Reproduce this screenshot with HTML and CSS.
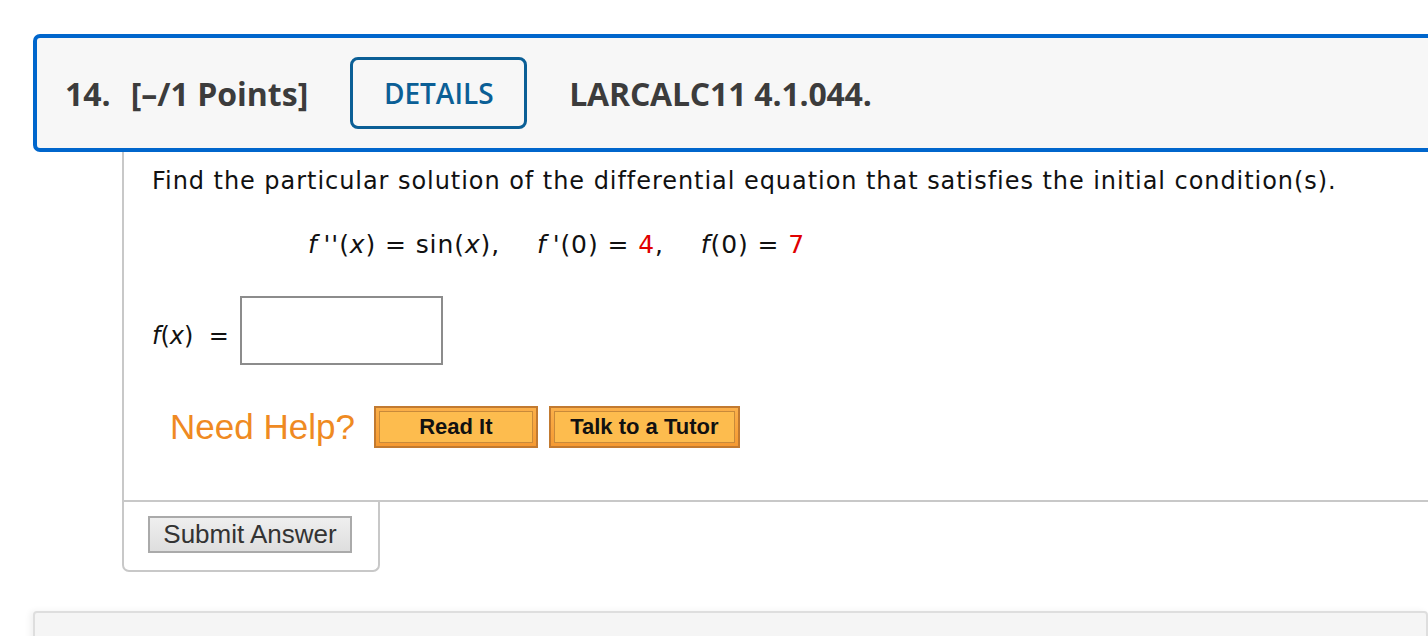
FILE: index.html
```html
<!DOCTYPE html>
<html>
<head>
<meta charset="utf-8">
<link rel="stylesheet" href="styles.css">
</head>
<body>
<div class="page">
  <div class="question">
    <div class="q-header">
      <span class="q-num">14.</span>
      <span class="q-points">[–/1 Points]</span>
      <span class="details-btn">DETAILS</span>
      <span class="q-code">LARCALC11 4.1.044.</span>
    </div>
    <div class="q-body">
      <p class="prompt">Find the particular solution of the differential equation that satisfies the initial condition(s).</p>
      <p class="equation"><i>f</i>&#8239;''(<i>x</i>) = sin(<i>x</i>),<span class="sp"></span><i>f</i>&#8239;'(0) = <span class="red">4</span>,<span class="sp"></span><i>f</i>(0) = <span class="red">7</span></p>
      <div class="answer-row">
        <span class="answer-label"><i>f</i>(<i>x</i>)&nbsp; =</span>
        <span class="answer-box"></span>
      </div>
      <div class="help-row">
        <span class="need-help">Need Help?</span>
        <span class="help-btn read"><span class="help-inner">Read It</span></span>
        <span class="help-btn tutor"><span class="help-inner">Talk to a Tutor</span></span>
      </div>
    </div>
    <div class="submit-tab">
      <span class="submit-btn">Submit Answer</span>
    </div>
  </div>
  <div class="next-card"></div>
</div>
</body>
</html>
```
FILE: styles.css
```css
html, body {
  margin: 0;
  padding: 0;
  background: #ffffff;
}
.page {
  width: 1428px;
  height: 636px;
  overflow: hidden;
  padding-top: 34px;
  box-sizing: border-box;
}
.question {
  margin-left: 33px;
}
.q-header {
  display: flex;
  align-items: center;
  height: 110px;
  margin-right: -40px;
  border: 4px solid #0066cc;
  border-radius: 7px;
  background: #f7f7f7;
  font-family: "Open Sans", sans-serif;
  font-weight: 700;
  color: #3c3c3c;
  font-size: 32px;
  padding-left: 28px;
}
.q-num {
  margin-right: 20px;
}
.q-points {
  margin-right: 42px;
}
.details-btn {
  display: flex;
  align-items: center;
  justify-content: center;
  width: 171px;
  height: 66px;
  border: 3px solid #0b5f96;
  border-radius: 8px;
  color: #0b5f96;
  font-weight: 600;
  font-size: 28px;
  background: #f7f7f7;
  margin-right: 42px;
}
.q-code {
  display: inline-block;
  letter-spacing: -0.2px;
}
.q-body {
  margin-left: 89px;
  border-left: 2px solid #c8c8c8;
  border-bottom: 2px solid #c8c8c8;
  padding: 12px 0 52px 28px;
  font-family: "DejaVu Sans", Verdana, sans-serif;
  color: #111;
  font-size: 24px;
  letter-spacing: 0.95px;
}
.prompt {
  margin: 0;
  line-height: 34px;
}
.equation {
  margin: 30px 0 0 156px;
  line-height: 34px;
  font-size: 25px;
  letter-spacing: 0.9px;
}
.sp {
  display: inline-block;
  width: 37px;
}
.red {
  color: #e00000;
}
.answer-row {
  display: flex;
  align-items: center;
  margin-top: 34px;
  letter-spacing: 0;
}
.answer-label {
  width: 88px;
  padding-top: 10px;
}
.answer-box {
  width: 199px;
  height: 65px;
  border: 2px solid #8c8c8c;
  background: #fff;
}
.help-row {
  display: flex;
  align-items: center;
  margin-top: 41px;
  margin-left: 18px;
  font-family: "Liberation Sans", Arial, sans-serif;
  letter-spacing: 0;
}
.need-help {
  color: #ef8a22;
  font-size: 35px;
  margin-right: 19px;
}
.help-btn {
  display: flex;
  box-sizing: border-box;
  height: 42px;
  padding: 3px;
  border: 2px solid #c27a30;
  background: linear-gradient(#fbb04a, #f59a32);
  margin-right: 11px;
}
.help-btn.read { width: 164px; }
.help-btn.tutor { width: 191px; }
.help-inner {
  flex: 1;
  display: flex;
  align-items: center;
  justify-content: center;
  border: 1px solid #c88a3a;
  background: #fdbc4e;
  font-weight: 700;
  font-size: 22px;
  color: #111;
}
.submit-tab {
  margin-left: 89px;
  width: 254px;
  height: 68px;
  border: 2px solid #c8c8c8;
  border-top: none;
  border-radius: 0 0 7px 7px;
  display: flex;
  align-items: flex-start;
}
.submit-btn {
  margin: 14px 0 0 24px;
  width: 200px;
  height: 33px;
  border: 2px solid #aaaaaa;
  background: linear-gradient(#efefef, #dedede);
  font-family: "Liberation Sans", Arial, sans-serif;
  font-size: 26px;
  color: #333;
  display: flex;
  align-items: center;
  justify-content: center;
}
.next-card {
  margin: 39px 0 0 33px;
  height: 60px;
  border: 2px solid #dedede;
  border-radius: 4px;
  background: #f5f5f5;
  box-shadow: -3px 0 6px rgba(0,0,0,0.06);
}
```
